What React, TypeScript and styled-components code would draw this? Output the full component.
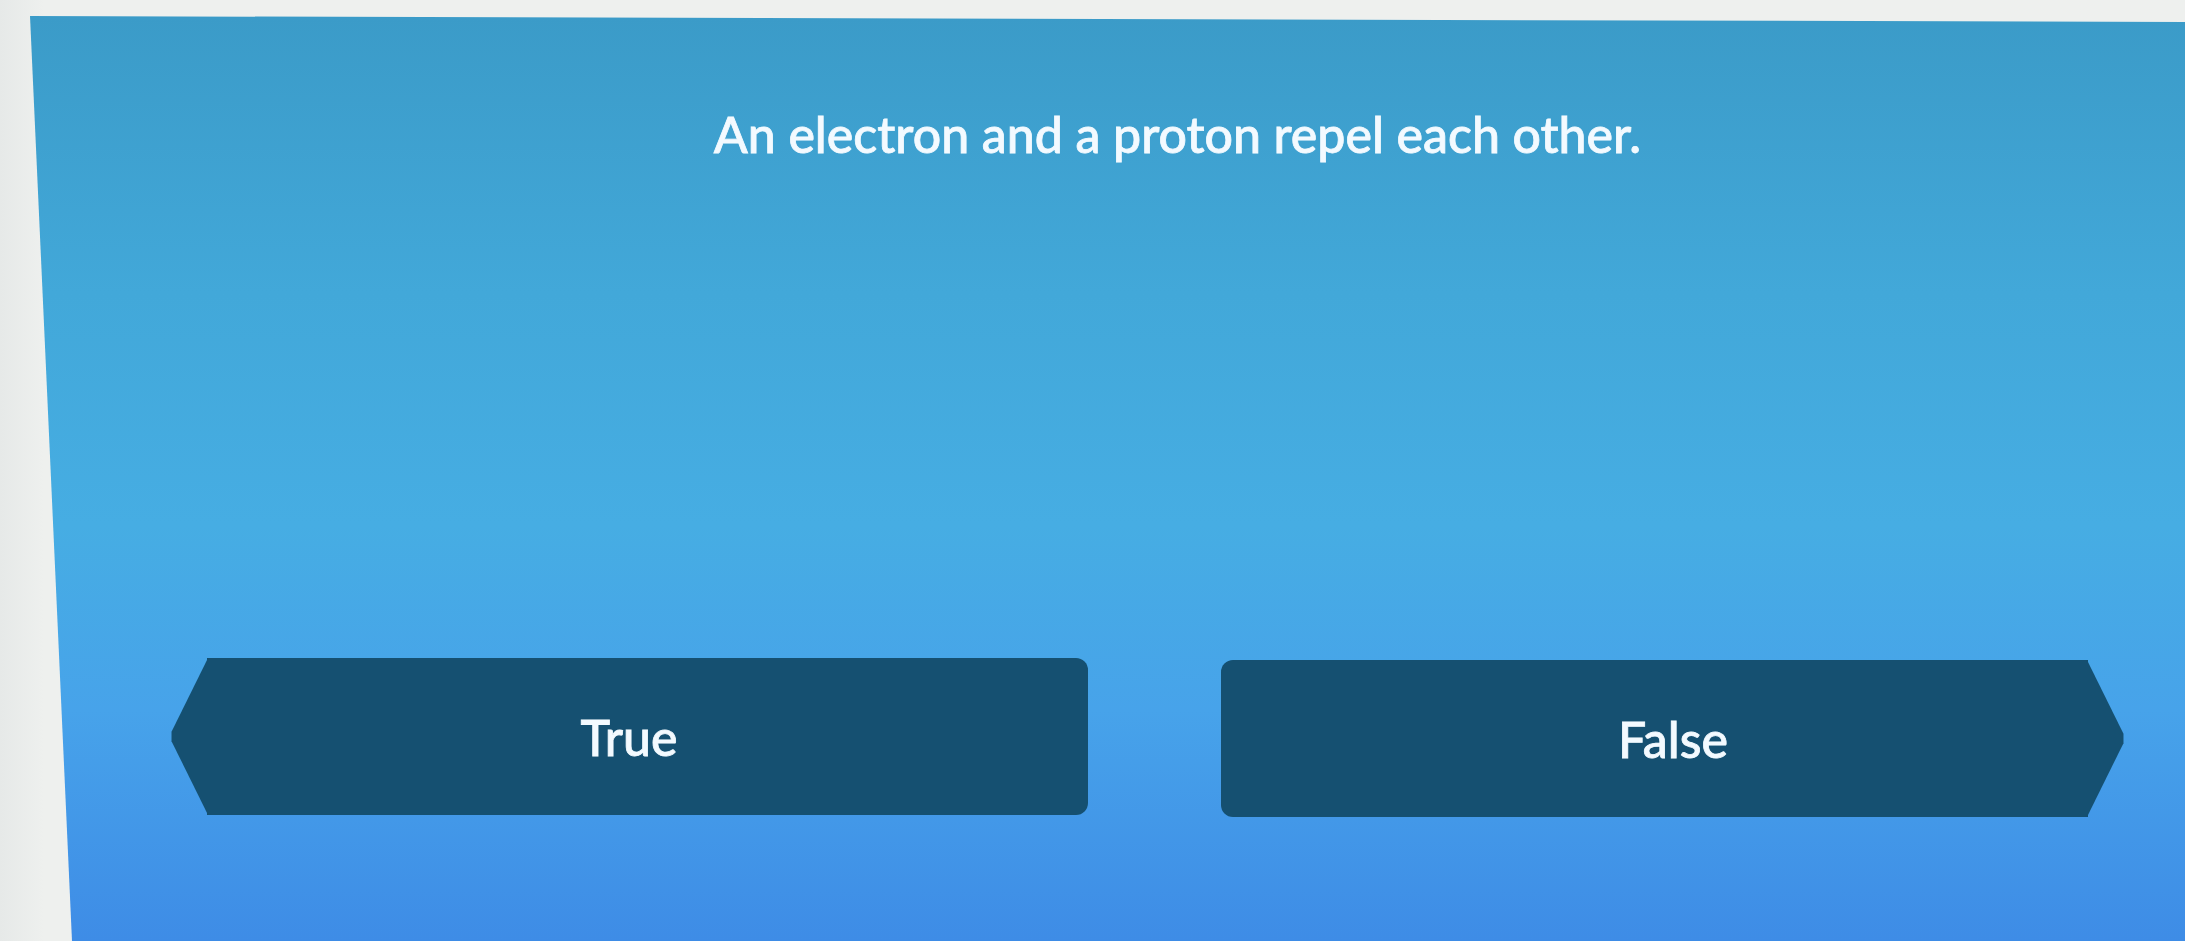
import styled, { createGlobalStyle } from 'styled-components';

const GlobalStyle = createGlobalStyle`
	html, body {
		margin: 0;
		padding: 0;
		height: 100%;
		overflow: hidden;
		background: #eceeec;
	}
	#root {
		height: 100%;
	}
`;

const QuizPage = () => {
	return (
		<>
			<GlobalStyle />
			<Frame>
				<Stage>
					<Question>An electron and a proton repel each other.</Question>
					<Answers>
						<Answer $point="left">True</Answer>
						<Answer $point="right">False</Answer>
					</Answers>
				</Stage>
			</Frame>
		</>
	);
};

export default QuizPage;

const Frame = styled.div`
	height: 100%;
	box-sizing: border-box;
	padding: 16px 0 0 30px;
	display: flex;
	background: linear-gradient(90deg, #e6e9e8 0%, #eef0ee 2%);
`;

const Stage = styled.main`
	flex: 1;
	display: flex;
	flex-direction: column;
	background: linear-gradient(
		180deg,
		#3b9bc8 0%,
		#42a8d9 30%,
		#46ade3 55%,
		#47a3ea 75%,
		#3e8ce6 100%
	);
	/* slight skew of the screen edge */
	clip-path: polygon(0 0, 100% 6px, 100% 100%, 42px 100%);
	font-family: Lato, 'Open Sans', sans-serif;
	color: #f3faff;
`;

const Question = styled.h1`
	margin: 0;
	padding: 88px 0 0 140px;
	text-align: center;
	font-size: 50px;
	line-height: 60px;
	font-weight: 500;
	letter-spacing: 0;
	-webkit-text-stroke: 0.8px #f3faff;
`;

const Answers = styled.div`
	display: grid;
	grid-template-columns: 881fr 867fr;
	column-gap: 133px;
	padding: 0 97px 0 177px;
	margin-top: 494px;
`;

const Answer = styled.button<{ $point: 'left' | 'right' }>`
	position: relative;
	height: 157px;
	border: none;
	border-radius: ${(p) => (p.$point === 'left' ? '0 12px 12px 0' : '12px 0 0 12px')};
	padding: ${(p) => (p.$point === 'left' ? '0 37px 0 0' : '0 0 0 37px')};
	background: #155071;
	color: #f3faff;
	font-family: Lato, 'Open Sans', sans-serif;
	font-size: 50px;
	font-weight: 500;
	-webkit-text-stroke: 0.8px #f3faff;
	cursor: pointer;
	margin-top: ${(p) => (p.$point === 'left' ? '0' : '2px')};

	&::before {
		content: '';
		position: absolute;
		top: 0;
		bottom: 0;
		width: 38px;
		background: #155071;
		${(p) =>
			p.$point === 'left'
				? 'left: -37px; clip-path: polygon(100% 0, 4% 47%, 4% 53%, 100% 100%);'
				: 'right: -37px; clip-path: polygon(0 0, 96% 47%, 96% 53%, 0 100%);'}
	}
`;
